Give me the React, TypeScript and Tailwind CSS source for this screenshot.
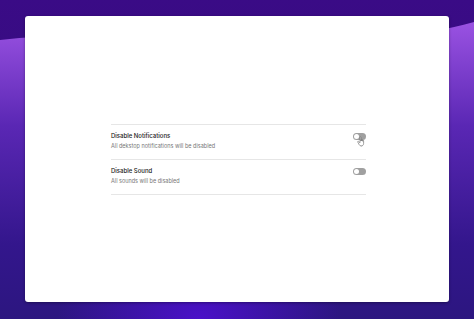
import React from 'react';

const settings = [
  { title: 'Disable Notifications', desc: 'All dekstop notifications will be disabled', cursor: true },
  { title: 'Disable Sound', desc: 'All sounds will be disabled', cursor: false },
];

const Wallpaper: React.FC = () => (
  <svg className="absolute inset-0 h-full w-full" viewBox="0 0 474 319" preserveAspectRatio="none">
    <defs>
      <linearGradient id="base" x1="0" y1="0" x2="0" y2="1">
        <stop offset="0" stopColor="#3a0b86" />
        <stop offset="1" stopColor="#2a1272" />
      </linearGradient>
      <linearGradient id="wave" x1="0" y1="0" x2="0" y2="1">
        <stop offset="0" stopColor="#9a52e2" />
        <stop offset="0.35" stopColor="#5a27b4" />
        <stop offset="0.75" stopColor="#33168c" />
        <stop offset="1" stopColor="#2c1680" />
      </linearGradient>
      <radialGradient id="glow" cx="0.42" cy="1" r="0.3">
        <stop offset="0" stopColor="#4c10cc" stopOpacity="0.95" />
        <stop offset="1" stopColor="#4c10cc" stopOpacity="0" />
      </radialGradient>
    </defs>
    <rect width="474" height="319" fill="url(#base)" />
    <path d="M0,40 C80,30 160,40 240,42 C330,44 410,40 474,22 L474,319 L0,319 Z" fill="url(#wave)" />
    <rect width="474" height="319" fill="url(#glow)" />
  </svg>
);

const Toggle: React.FC = () => (
  <div className="flex h-[7px] w-[13px] items-center rounded-full bg-[#a0a0a0] px-[1px]">
    <div className="h-[5px] w-[5px] rounded-full bg-white" />
  </div>
);

const HandCursor: React.FC = () => (
  <svg className="absolute left-[4px] top-[3px]" width="9" height="11" viewBox="0 0 18 22">
    <path
      d="M6 2.5c0-1 1.8-1 1.8 0V10V7.5c0-1 1.8-1 1.8 0V10V8.5c0-1 1.8-1 1.8 0V10.5V9.5c0-1 1.8-1 1.8 0V15c0 3-2 5-5 5H8.5c-2 0-3-1-4-2.5L1.5 12c-.6-1 .8-2 1.6-1.2L6 13.5Z"
      fill="white"
      stroke="#6b6b6b"
      strokeWidth="1.3"
      strokeLinejoin="round"
    />
  </svg>
);

export default function App() {
  return (
    <div className="relative h-screen w-full overflow-hidden font-['Inter',sans-serif]">
      <Wallpaper />
      <div className="relative flex h-full px-[25px] pt-[16px] pb-[17px]">
        <div className="flex flex-1 items-center rounded-[3px] bg-white shadow-[0_1px_3px_rgba(0,0,0,0.35)]">
          <div className="ml-[86px] w-[255px] border-t border-[#e6e6e6]">
            {settings.map((s) => (
              <div key={s.title} className="flex items-start justify-between border-b border-[#e6e6e6] pt-[7px] pb-[9px]">
                <div className="flex flex-col">
                  <span className="text-[6px] leading-[8px] font-medium text-[#222]">{s.title}</span>
                  <span className="mt-[3px] text-[5.5px] leading-[7px] text-[#777]">{s.desc}</span>
                </div>
                <div className="relative mt-[1px]">
                  <Toggle />
                  {s.cursor && <HandCursor />}
                </div>
              </div>
            ))}
          </div>
        </div>
      </div>
    </div>
  );
}
